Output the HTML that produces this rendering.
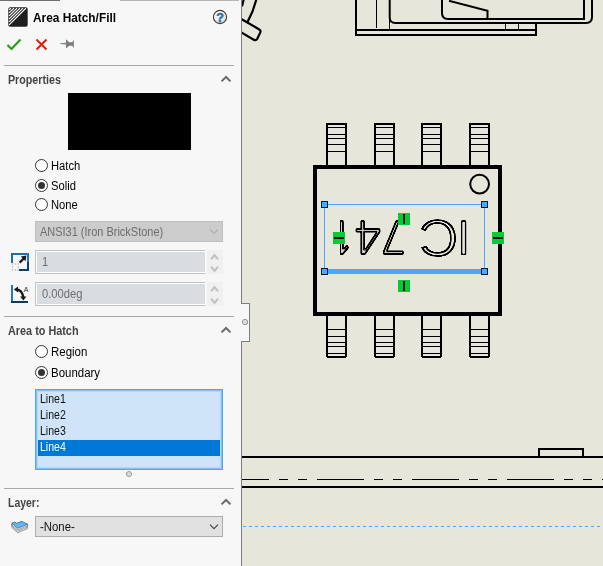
<!DOCTYPE html>
<html>
<head>
<meta charset="utf-8">
<title>Area Hatch/Fill</title>
<style>
html,body{margin:0;padding:0;}
body{width:603px;height:566px;overflow:hidden;position:relative;background:#e7e6da;font-family:"Liberation Sans",sans-serif;font-size:12px;color:#1a1a1a;}
#draw{position:absolute;left:0;top:0;width:603px;height:566px;}
#panel{position:absolute;left:0;top:0;width:241px;height:566px;background:#f7f7f7;}
#pborder{position:absolute;left:0;top:0;width:603px;height:566px;pointer-events:none;}
.abs{position:absolute;white-space:nowrap;}
.sep{position:absolute;left:4px;width:230px;height:1px;background:#a9a9a9;}
.h{font-weight:bold;color:#444;font-size:12px;}
.radio{position:absolute;width:11px;height:11px;border:1px solid #333;border-radius:50%;background:#fff;}
.radio.on::after{content:"";position:absolute;left:2px;top:2px;width:7px;height:7px;border-radius:50%;background:#333;}
.lbl{position:absolute;white-space:nowrap;font-size:12px;color:#000;}
.inp{position:absolute;left:35px;width:171px;height:24px;box-sizing:border-box;border:1px solid #c3c3c3;border-right-color:#fcfcfc;background:#fff;}
.inp i{position:absolute;left:1px;top:1px;right:0;bottom:1px;background:#d9dce1;}
.inp span{position:absolute;left:5.5px;top:4px;transform:scaleX(0.93);transform-origin:0 0;color:#6d6d6d;font-size:12px;font-style:normal;}
.li span{position:absolute;left:2px;top:0px;transform:scaleX(0.88);transform-origin:0 0;font-size:12px;color:#111;}
.li.sel{background:#0078d7;}
.li.sel span{color:#fff;}
.spin{position:absolute;left:207px;width:16px;height:24px;background:#f0f0f0;}
</style>
</head>
<body>
<svg id="draw" width="603" height="566" viewBox="0 0 603 566">
<g fill="none" stroke="#000" stroke-width="2.2" stroke-linejoin="round" stroke-linecap="round">
<path d="M256.5,-1 L252.5,11.5 L247.5,22"/>
<path d="M243.8,-1 L242.2,5.5"/>
<path d="M240,18.2 L259.3,29.5 Q261.2,30.7 260.2,32.6 L257.3,38.8 Q256.2,40.8 254.2,40 L240,31.6"/>
</g>
<g fill="none" stroke="#000" stroke-width="2" stroke-linejoin="miter">
<path d="M356,-1 V35 H536 V23"/>
<path d="M356,30 H536"/>
<path d="M389.7,-1 V17.5 Q389.7,23 395.5,23 H586 Q592,23 592,17 V-1"/>
<path d="M442,-1 V13 Q442,19 448,19 H584 V-1"/>
<path d="M449,0.8 L487.5,10.8 V19"/>
</g>
<g fill="none" stroke="#000" stroke-width="1" shape-rendering="crispEdges">
<path d="M376.5,0 V28"/>
<path d="M389.5,18 V30"/>
<path d="M505.5,23 V30"/>
<path d="M518.5,23 V30"/>
</g>
<!-- IC -->
<g fill="#000" shape-rendering="crispEdges">
<rect x="326" y="123" width="2" height="43"/><rect x="345" y="123" width="2" height="43"/><rect x="326" y="123" width="21" height="2"/>
<rect x="326" y="127" width="21" height="1"/><rect x="326" y="134" width="21" height="1"/><rect x="326" y="138" width="21" height="1"/><rect x="326" y="144" width="21" height="1"/><rect x="326" y="151" width="21" height="1"/>
<rect x="326" y="315" width="2" height="42"/><rect x="345" y="315" width="2" height="42"/><rect x="327" y="356" width="19" height="2"/>
<rect x="326" y="329" width="21" height="1"/><rect x="326" y="336" width="21" height="1"/><rect x="326" y="342" width="21" height="1"/><rect x="326" y="346" width="21" height="1"/><rect x="326" y="353" width="21" height="1"/>
<rect x="374" y="123" width="2" height="43"/><rect x="393" y="123" width="2" height="43"/><rect x="374" y="123" width="21" height="2"/>
<rect x="374" y="127" width="21" height="1"/><rect x="374" y="134" width="21" height="1"/><rect x="374" y="138" width="21" height="1"/><rect x="374" y="144" width="21" height="1"/><rect x="374" y="151" width="21" height="1"/>
<rect x="374" y="315" width="2" height="42"/><rect x="393" y="315" width="2" height="42"/><rect x="375" y="356" width="19" height="2"/>
<rect x="374" y="329" width="21" height="1"/><rect x="374" y="336" width="21" height="1"/><rect x="374" y="342" width="21" height="1"/><rect x="374" y="346" width="21" height="1"/><rect x="374" y="353" width="21" height="1"/>
<rect x="421" y="123" width="2" height="43"/><rect x="440" y="123" width="2" height="43"/><rect x="421" y="123" width="21" height="2"/>
<rect x="421" y="127" width="21" height="1"/><rect x="421" y="134" width="21" height="1"/><rect x="421" y="138" width="21" height="1"/><rect x="421" y="144" width="21" height="1"/><rect x="421" y="151" width="21" height="1"/>
<rect x="421" y="315" width="2" height="42"/><rect x="440" y="315" width="2" height="42"/><rect x="422" y="356" width="19" height="2"/>
<rect x="421" y="329" width="21" height="1"/><rect x="421" y="336" width="21" height="1"/><rect x="421" y="342" width="21" height="1"/><rect x="421" y="346" width="21" height="1"/><rect x="421" y="353" width="21" height="1"/>
<rect x="469" y="123" width="2" height="43"/><rect x="488" y="123" width="2" height="43"/><rect x="469" y="123" width="21" height="2"/>
<rect x="469" y="127" width="21" height="1"/><rect x="469" y="134" width="21" height="1"/><rect x="469" y="138" width="21" height="1"/><rect x="469" y="144" width="21" height="1"/><rect x="469" y="151" width="21" height="1"/>
<rect x="469" y="315" width="2" height="42"/><rect x="488" y="315" width="2" height="42"/><rect x="470" y="356" width="19" height="2"/>
<rect x="469" y="329" width="21" height="1"/><rect x="469" y="336" width="21" height="1"/><rect x="469" y="342" width="21" height="1"/><rect x="469" y="346" width="21" height="1"/><rect x="469" y="353" width="21" height="1"/>
<path d="M313,165 H502 V316 H313 Z M317,169 V312 H498 V169 Z" fill-rule="evenodd"/>
</g>
<circle cx="479.6" cy="184.1" r="9.4" fill="none" stroke="#000" stroke-width="2"/>
<filter id="ol" x="-5%" y="-10%" width="110%" height="120%"><feMorphology in="SourceAlpha" operator="erode" radius="1" result="e"/><feComposite in="SourceAlpha" in2="e" operator="out"/><feComponentTransfer><feFuncA type="linear" slope="2.2"/></feComponentTransfer></filter>
<text id="ictext" filter="url(#ol)" transform="rotate(180 403 237.75)" font-family="NanumGothic, Liberation Sans, sans-serif" font-size="45" fill="#000" stroke="#000" stroke-width="0.9"><tspan x="335.84" y="252.75" textLength="12.4" lengthAdjust="spacingAndGlyphs">I</tspan><tspan x="347.8" y="255.9" font-family="Liberation Sans, sans-serif" font-size="51.8" stroke-width="0.2" textLength="39.1" lengthAdjust="spacingAndGlyphs">C</tspan> <tspan x="400.08" y="254.5" textLength="25.69" lengthAdjust="spacingAndGlyphs">7</tspan><tspan x="424.64" y="254.5" textLength="26.48" lengthAdjust="spacingAndGlyphs">4</tspan><tspan x="453.4" y="254.2" font-size="44.2" stroke-width="1.6" textLength="19.5" lengthAdjust="spacingAndGlyphs">1</tspan></text>
<!-- selection -->
<g shape-rendering="crispEdges">
<path d="M324.5,204.5 H484.5 V271 M324.5,204.5 V271" fill="none" stroke="#4da6ff" stroke-width="1"/>
<rect x="324" y="269" width="161" height="5" fill="#4da6ff"/>
<g fill="#4da6ff" stroke="#0a1a33" stroke-width="1">
<rect x="321.5" y="201.5" width="6" height="6"/>
<rect x="481.5" y="201.5" width="6" height="6"/>
<rect x="321.5" y="268.5" width="6" height="6"/>
<rect x="481.5" y="268.5" width="6" height="6"/>
</g>
<g fill="#00cc33">
<rect x="333" y="232" width="12" height="12"/>
<rect x="492" y="232" width="12" height="12"/>
<rect x="398" y="213" width="12" height="12"/>
<rect x="398" y="280" width="12" height="12"/>
</g>
<g fill="#1a0a1a">
<rect x="334" y="237" width="10" height="2"/>
<rect x="493" y="237" width="10" height="2"/>
<rect x="403" y="214" width="2" height="10"/>
<rect x="403" y="281" width="2" height="10"/>
</g>
</g>
<!-- bottom -->
<g shape-rendering="crispEdges" fill="none" stroke="#000">
<path d="M240,457 H603" stroke-width="2"/>
<path d="M240,487 H603" stroke-width="2"/>
<path d="M539,457 V449 H583 V457" stroke-width="2"/>
<path d="M222,479.5 H603" stroke-width="1" stroke-dasharray="47 10 9 10 9 10"/>
<path d="M243,526.5 H603" stroke="#4da6ff" stroke-width="1" stroke-dasharray="3 3"/>
</g>
</svg>
<div id="panel">
<div class="abs" style="left:0;top:0;width:60px;height:1px;background:#6e6e6e;"></div>
<div class="abs" style="left:120px;top:0;width:119px;height:1px;background:#b5b5b5;"></div>
<!-- title icon -->
<svg class="abs" style="left:7px;top:6px" width="22" height="22" viewBox="-1 -1 22 22">
<rect x="-0.5" y="-0.5" width="21" height="21" rx="2" fill="#ffffff"/>
<rect x="0.3" y="0.2" width="19.4" height="19.5" rx="1.8" fill="#1f1f1f"/>
<g stroke="#fff" stroke-width="1.15" stroke-linecap="square">
<path d="M2.5,1.5 L1.5,2.5"/><path d="M5.5,1.5 L1.5,5.5"/><path d="M8.5,1.5 L1.5,8.5"/><path d="M11.5,1.5 L1.5,11.5"/><path d="M14.5,1.5 L1.5,14.5"/><path d="M17.5,1.5 L1.5,17.5"/>
</g>
</svg>
<div class="abs" id="title" style="transform:scaleX(0.912);transform-origin:0 0;left:32.5px;top:9.5px;font-weight:bold;font-size:13px;color:#000;">Area Hatch/Fill</div>
<!-- help -->
<svg class="abs" style="left:212px;top:9px" width="16" height="16" viewBox="0 0 16 16">
<defs><linearGradient id="hg" x1="0" y1="0" x2="1" y2="1"><stop offset="0" stop-color="#ffffff"/><stop offset="1" stop-color="#dcdcdc"/></linearGradient></defs>
<circle cx="8" cy="8" r="6.6" fill="url(#hg)" stroke="#3c3c3c" stroke-width="1.1"/>
<text x="8" y="12.8" text-anchor="middle" font-family="Liberation Sans, sans-serif" font-weight="bold" font-size="12.5" fill="#1c6db0" stroke="#1c6db0" stroke-width="0.4">?</text>
</svg>
<!-- ok / cancel / pin -->
<svg class="abs" style="left:6px;top:37px" width="16" height="14" viewBox="0 0 16 14">
<path d="M1.5,8 L5.5,12 L14.5,2.5" fill="none" stroke="#2a9d1e" stroke-width="2.2" stroke-linecap="butt" stroke-linejoin="miter"/>
</svg>
<svg class="abs" style="left:35px;top:38px" width="13" height="13" viewBox="0 0 13 13">
<path d="M1.5,1.5 L11.5,11.5 M11.5,1.5 L1.5,11.5" fill="none" stroke="#d8220f" stroke-width="2" stroke-linecap="butt"/>
</svg>
<svg class="abs" style="left:60px;top:39px" width="16" height="11" viewBox="0 0 16 11">
<path d="M0,4.3 L6,3.8 V5.4 L0,4.9 Z" fill="#858585"/>
<path d="M6,0.2 L9.2,3.3 H12.3 L13.9,0.8 V9.2 L12.3,6.7 H9.2 L6,9.6 Z" fill="#7d7d7d"/>
</svg>

<div class="sep" style="top:65px"></div>
<div class="abs h" id="hprop" style="transform:scaleX(0.89);transform-origin:0 0;left:8px;top:73px;">Properties</div>
<svg class="abs chev" style="left:220px;top:75px" width="12" height="8" viewBox="0 0 12 8"><path d="M1.5,6.4 L6,2 L10.5,6.4" fill="none" stroke="#6a6a6a" stroke-width="2"/></svg>
<div class="abs" style="left:68px;top:93px;width:123px;height:57px;background:#000;"></div>

<div class="radio" style="left:35px;top:159px"></div><div class="lbl" id="l1" style="transform:scaleX(0.935);transform-origin:0 0;left:51px;top:159px">Hatch</div>
<div class="radio on" style="left:35px;top:179px"></div><div class="lbl" id="l2" style="transform:scaleX(0.933);transform-origin:0 0;left:51px;top:179px">Solid</div>
<div class="radio" style="left:35px;top:198px"></div><div class="lbl" id="l3" style="transform:scaleX(0.934);transform-origin:0 0;left:51px;top:198px">None</div>

<div class="abs" style="left:35px;top:221px;width:188px;height:21px;box-sizing:border-box;background:#cccccc;border:1px solid #bfbfbf;">
<span class="abs" id="ansi" style="transform:scaleX(0.914);transform-origin:0 0;left:4px;top:3px;color:#6d6d6d;font-size:12px;">ANSI31 (Iron BrickStone)</span>
<svg class="abs" style="left:173px;top:6px" width="10" height="7" viewBox="0 0 10 7"><path d="M1,1.5 L5,5.5 L9,1.5" fill="none" stroke="#b0b0b0" stroke-width="1.1"/></svg>
</div>

<!-- scale icon -->
<svg class="abs" style="left:11px;top:253px" width="18" height="18" viewBox="0 0 18 18">
<path d="M0,1 H18" stroke="#1f6fa5" stroke-width="2" fill="none"/>
<path d="M1,0 V10" stroke="#1f6fa5" stroke-width="2" fill="none"/>
<path d="M17,0 V9" stroke="#2676ab" stroke-width="2" fill="none"/>
<path d="M17,9 V18" stroke="#0d3f68" stroke-width="2" fill="none"/>
<path d="M8,17 H18" stroke="#0d3f68" stroke-width="2" fill="none"/>
<g fill="#b9b9b9">
<rect x="0.8" y="10.3" width="1.4" height="1.4"/><rect x="3.8" y="10.3" width="1.4" height="1.4"/><rect x="6.6" y="10.3" width="1.4" height="1.4"/>
<rect x="0.8" y="13.3" width="1.4" height="1.4"/><rect x="6.6" y="13.3" width="1.4" height="1.4"/>
<rect x="0.8" y="16.2" width="1.4" height="1.4"/><rect x="3.8" y="16.2" width="1.4" height="1.4"/><rect x="6.6" y="16.2" width="1.4" height="1.4"/>
</g>
<path d="M8.6,9.6 L13,5.2" stroke="#1a1a1a" stroke-width="2.3" fill="none"/>
<path d="M9.8,3.4 L15.4,2.6 L14.6,8.2 Z" fill="#1a1a1a"/>
</svg>
<div class="inp" style="top:250px"><i></i><span>1</span></div>
<div class="spin" style="top:250px">
<svg class="abs" style="left:0;top:0" width="16" height="24" viewBox="0 0 16 24"><path d="M4,9.3 L7.5,5 L11,9.3 M4,16.7 L7.5,21 L11,16.7" fill="none" stroke="#c2c2c2" stroke-width="2"/></svg>
</div>
<!-- angle icon -->
<svg class="abs" style="left:11px;top:285px" width="18" height="18" viewBox="0 0 18 18">
<path d="M1,0 V18" stroke="#2877b3" stroke-width="2" fill="none"/>
<path d="M0,17 H17" stroke="#0b3d66" stroke-width="2" fill="none"/>
<path d="M5.5,4.4 Q11.2,5 12.3,12.5" fill="none" stroke="#1a1a1a" stroke-width="2.3"/>
<path d="M2.8,4.4 L7,1.4 L7.2,7.6 Z" fill="#1a1a1a"/>
<path d="M9,11.6 L15.4,11.6 L12.4,15.6 Z" fill="#1a1a1a"/>
<text x="12.8" y="6.6" font-family="Liberation Sans, sans-serif" font-size="7" fill="#2a2a2a" textLength="4.6" lengthAdjust="spacingAndGlyphs">A</text>
</svg>
<div class="inp" style="top:282px"><i></i><span>0.00deg</span></div>
<div class="spin" style="top:282px">
<svg class="abs" style="left:0;top:0" width="16" height="24" viewBox="0 0 16 24"><path d="M4,9.3 L7.5,5 L11,9.3 M4,16.7 L7.5,21 L11,16.7" fill="none" stroke="#c2c2c2" stroke-width="2"/></svg>
</div>

<div class="sep" style="top:316px"></div>
<div class="abs h" id="harea" style="transform:scaleX(0.904);transform-origin:0 0;left:8px;top:324px;">Area to Hatch</div>
<svg class="abs chev" style="left:220px;top:326px" width="12" height="8" viewBox="0 0 12 8"><path d="M1.5,6.4 L6,2 L10.5,6.4" fill="none" stroke="#6a6a6a" stroke-width="2"/></svg>

<div class="radio" style="left:35px;top:345px"></div><div class="lbl" id="l4" style="transform:scaleX(0.955);transform-origin:0 0;left:51px;top:345px">Region</div>
<div class="radio on" style="left:35px;top:366px"></div><div class="lbl" id="l5" style="transform:scaleX(0.955);transform-origin:0 0;left:51px;top:366px">Boundary</div>

<div class="abs" id="list" style="left:35px;top:389px;width:188px;height:81px;box-sizing:border-box;border:1px solid #4ea8ea;background:#cfe4f8;box-shadow:inset 0 0 0 1px #86c2f1, inset 0 0 0 2px #b4d7f6;">
<div class="abs li" style="left:2px;top:2px;width:182px;height:16px;"><span>Line1</span></div>
<div class="abs li" style="left:2px;top:18px;width:182px;height:16px;"><span>Line2</span></div>
<div class="abs li" style="left:2px;top:34px;width:182px;height:16px;"><span>Line3</span></div>
<div class="abs li sel" style="left:2px;top:50px;width:182px;height:16px;"><span>Line4</span></div>
</div>
<div class="abs" style="left:126px;top:471px;width:4px;height:4px;border-radius:50%;background:#dcdcdc;border:1px solid #979797;"></div>

<div class="sep" style="top:488px"></div>
<div class="abs h" id="hlayer" style="transform:scaleX(0.871);transform-origin:0 0;left:8px;top:496px;">Layer:</div>
<svg class="abs chev" style="left:220px;top:498px" width="12" height="8" viewBox="0 0 12 8"><path d="M1.5,6.4 L6,2 L10.5,6.4" fill="none" stroke="#6a6a6a" stroke-width="2"/></svg>
<!-- layer icon -->
<svg class="abs" style="left:11px;top:519px" width="18" height="16" viewBox="0 0 18 16">
<path d="M1,8.7 L6.6,13.7 L16.3,9.7 L16.3,5.3 L1,4.3 Z" fill="#ffffff" stroke="#444" stroke-width="0.55" stroke-linejoin="round"/>
<path d="M1,7.2 L6.6,12.2 L16.3,8.2 L16.3,5.3 L1,4.3 Z" fill="#ffffff" stroke="#444" stroke-width="0.55" stroke-linejoin="round"/>
<path d="M1,5.8 L6.6,10.8 L16.3,6.8 L16.3,5.3 L1,4.3 Z" fill="#ffffff" stroke="#444" stroke-width="0.55" stroke-linejoin="round"/>
<path d="M1,4.3 L4,3 L5.3,4.3 L10.9,2.3 L16.3,5.3 L6.6,9.3 Z" fill="#68b4ec" stroke="#2a6ea5" stroke-width="0.8" stroke-linejoin="round"/>
</svg>
<div class="abs" style="left:35px;top:516px;width:188px;height:21px;box-sizing:border-box;background:#e1e1e1;border:1px solid #adadad;">
<span class="abs" id="none" style="transform:scaleX(0.95);transform-origin:0 0;left:4px;top:3px;color:#111;font-size:12px;">-None-</span>
<svg class="abs" style="left:172px;top:6px" width="11" height="8" viewBox="0 0 11 8"><path d="M2,1.6 L6,5.7 L10,1.6" fill="none" stroke="#444" stroke-width="1.1"/></svg>
</div>
</div>
<svg id="pborder" width="603" height="566" viewBox="0 0 603 566">
<path d="M241,303 H250 V342 H241 Z" fill="#f7f7f7" stroke="none"/>
<path d="M241.5,0 V303.5 H249.5 V341.5 H241.5 V566" fill="none" stroke="#7d7d7d" stroke-width="1" shape-rendering="crispEdges"/>
<circle cx="245" cy="322" r="2.7" fill="#d9dde2" stroke="#9a9a9a" stroke-width="1"/>
</svg>
</body>
</html>
